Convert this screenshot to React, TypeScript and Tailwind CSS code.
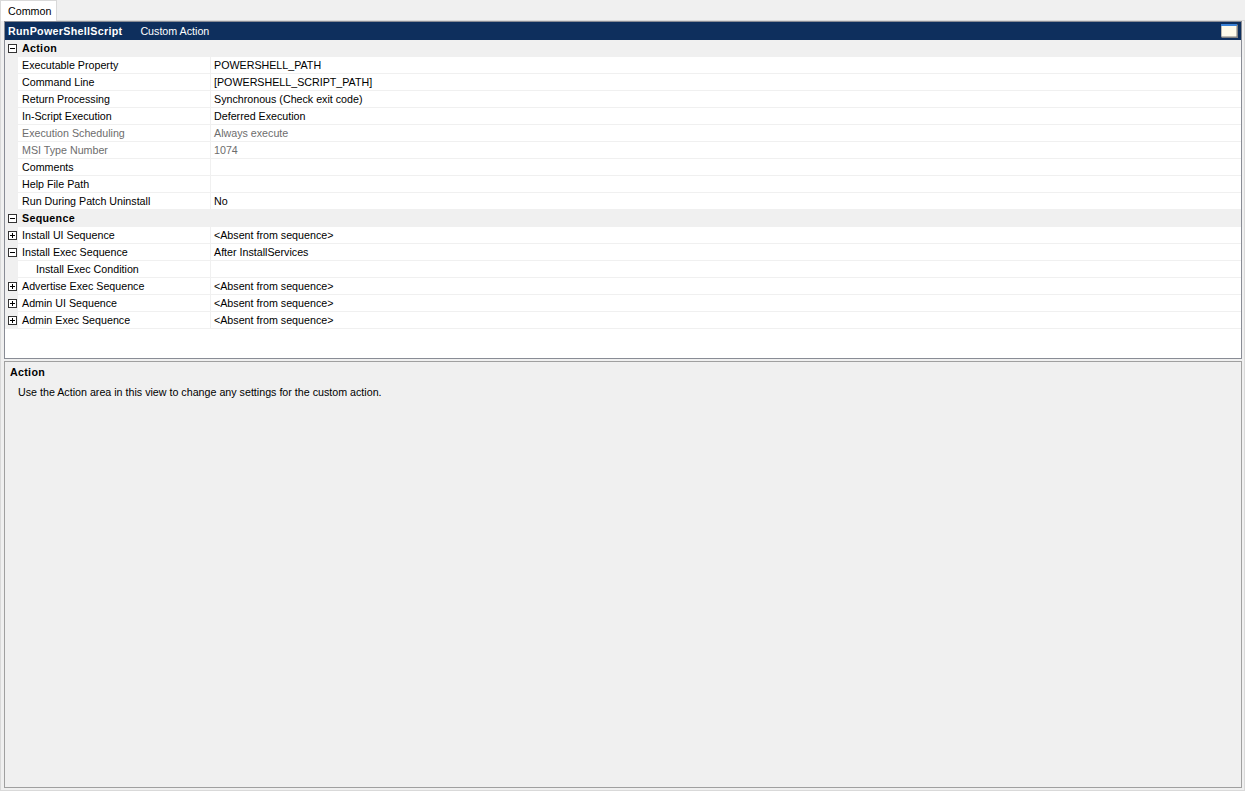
import React from 'react';

type Row = {
  name: string;
  value?: string;
  disabled?: boolean;
  expander?: 'plus' | 'minus';
  indent?: boolean;
};

const actionRows: Row[] = [
  { name: 'Executable Property', value: 'POWERSHELL_PATH' },
  { name: 'Command Line', value: '[POWERSHELL_SCRIPT_PATH]' },
  { name: 'Return Processing', value: 'Synchronous (Check exit code)' },
  { name: 'In-Script Execution', value: 'Deferred Execution' },
  { name: 'Execution Scheduling', value: 'Always execute', disabled: true },
  { name: 'MSI Type Number', value: '1074', disabled: true },
  { name: 'Comments' },
  { name: 'Help File Path' },
  { name: 'Run During Patch Uninstall', value: 'No' },
];

const sequenceRows: Row[] = [
  { name: 'Install UI Sequence', value: '<Absent from sequence>', expander: 'plus' },
  { name: 'Install Exec Sequence', value: 'After InstallServices', expander: 'minus' },
  { name: 'Install Exec Condition', indent: true },
  { name: 'Advertise Exec Sequence', value: '<Absent from sequence>', expander: 'plus' },
  { name: 'Admin UI Sequence', value: '<Absent from sequence>', expander: 'plus' },
  { name: 'Admin Exec Sequence', value: '<Absent from sequence>', expander: 'plus' },
];

const Expander: React.FC<{ kind: 'plus' | 'minus' }> = ({ kind }) => (
  <svg width="9" height="9" viewBox="0 0 9 9" className="block">
    <rect x="0.5" y="0.5" width="8" height="8" fill="white" stroke="#333" />
    <path d="M2 4.5h5" stroke="#000" />
    {kind === 'plus' && <path d="M4.5 2v5" stroke="#000" />}
  </svg>
);

const GridRow: React.FC<{ row: Row }> = ({ row }) => (
  <div className="flex h-[17px]">
    <div className="w-[13px] shrink-0 bg-[#f0f0f0] flex items-center justify-end pr-[1px]">
      {row.expander && <Expander kind={row.expander} />}
    </div>
    <div
      className={`w-[193px] shrink-0 border-b border-r border-[#f0f0f0] flex items-center ${
        row.indent ? 'pl-[18px]' : 'pl-[4px]'
      } ${row.disabled ? 'text-[#6d6d6d]' : 'text-black'}`}
    >
      {row.name}
    </div>
    <div
      className={`flex-1 border-b border-[#f0f0f0] flex items-center pl-[3px] ${
        row.disabled ? 'text-[#6d6d6d]' : 'text-black'
      }`}
    >
      {row.value}
    </div>
  </div>
);

const Category: React.FC<{ title: string }> = ({ title }) => (
  <div className="flex h-[17px] bg-[#f0f0f0] items-center">
    <div className="w-[13px] shrink-0 flex items-center justify-end pr-[1px]">
      <Expander kind="minus" />
    </div>
    <div className="pl-[4px] font-bold tracking-[0.3px]">{title}</div>
  </div>
);

const WindowIcon: React.FC = () => (
  <svg width="17" height="14" viewBox="0 0 17 14" className="block">
    <rect x="1" y="1" width="16" height="13" fill="#8a8a8a" />
    <rect x="0" y="0" width="16" height="13" fill="#fffbeb" stroke="#7a7a7a" strokeWidth="1" />
    <rect x="0" y="0" width="16" height="2" fill="#3b82d6" />
  </svg>
);

export default function App() {
  return (
    <div
      className="w-[1245px] h-[791px] bg-[#f0f0f0] flex flex-col text-[10.7px] leading-none text-black overflow-hidden"
      style={{ fontFamily: '"Liberation Sans", Arial, sans-serif' }}
    >
      <div className="h-[20px] flex shrink-0">
        <div className="w-[57px] h-[21px] bg-white border border-b-0 border-[#d9d9d9] flex items-center pl-[7px] relative z-10">
          Common
        </div>
      </div>
      <div className="flex-1 border border-[#d9d9d9] pl-[3px] pr-[2px] pb-[2px] flex flex-col gap-[2px] min-h-0">
        <div className="h-[338px] shrink-0 border border-[#898c95] bg-white flex flex-col">
          <div className="h-[18px] bg-[#0e2f5d] flex items-center text-white shrink-0">
            <span className="font-bold tracking-[0.3px] pl-[3px]">RunPowerShellScript</span>
            <span className="pl-[18px]">Custom Action</span>
            <div className="ml-auto pr-[3px]">
              <WindowIcon />
            </div>
          </div>
          <Category title="Action" />
          {actionRows.map((r) => (
            <GridRow key={r.name} row={r} />
          ))}
          <Category title="Sequence" />
          {sequenceRows.map((r) => (
            <GridRow key={r.name} row={r} />
          ))}
        </div>
        <div className="flex-1 border border-[#a0a0a0] bg-[#f0f0f0] pl-[5px] pt-[4px]">
          <div className="font-bold tracking-[0.3px] h-[12px] flex items-center">Action</div>
          <div className="pl-[8px] mt-[8px] h-[12px] flex items-center">
            Use the Action area in this view to change any settings for the custom action.
          </div>
        </div>
      </div>
    </div>
  );
}
